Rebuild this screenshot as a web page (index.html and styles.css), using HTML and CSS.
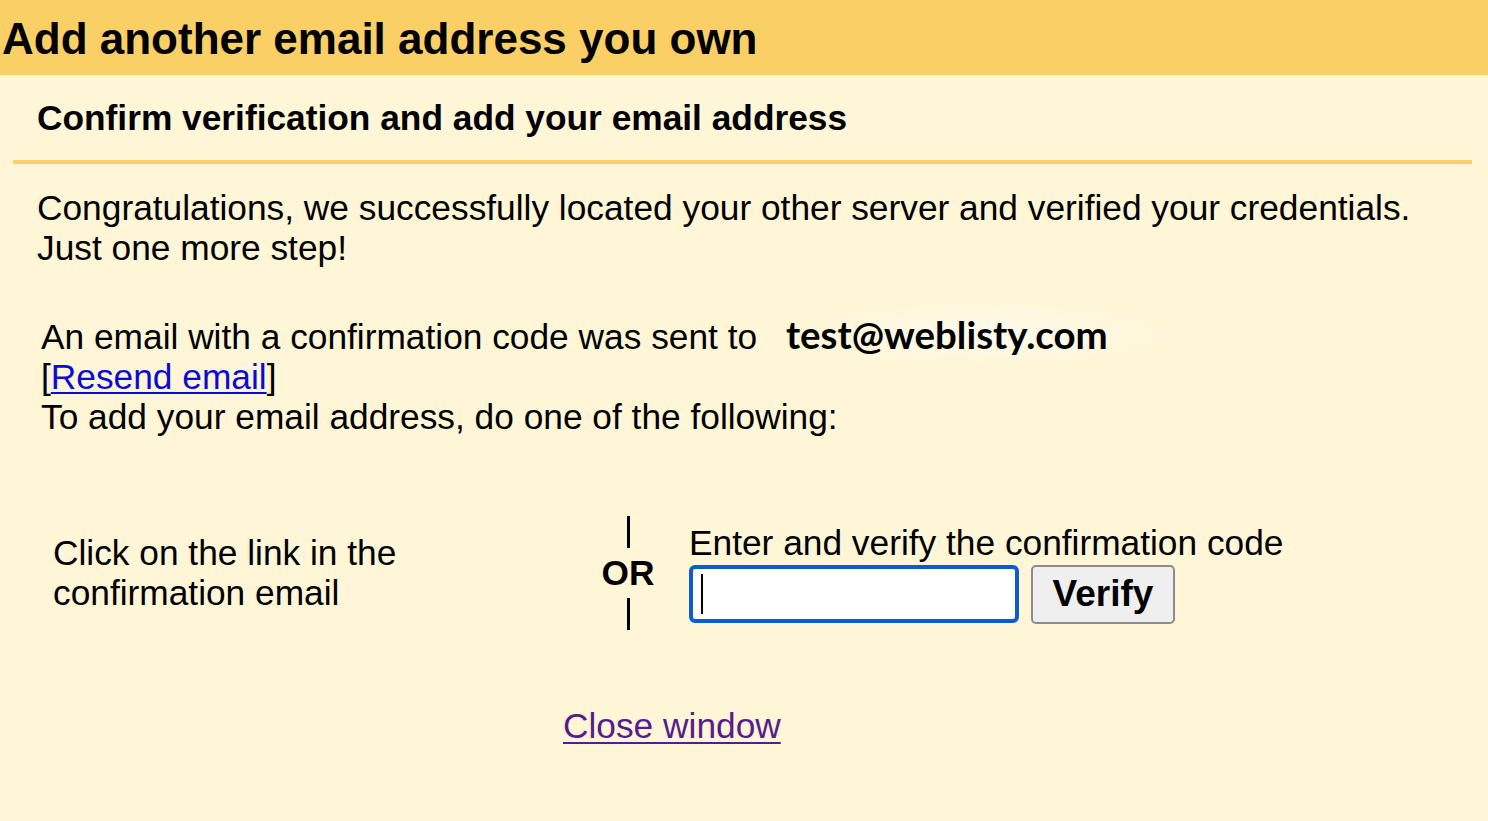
FILE: index.html
```html
<!DOCTYPE html>
<html lang="en">
<head>
<meta charset="utf-8">
<title>Add another email address you own</title>
<link rel="stylesheet" href="styles.css">
</head>
<body>
<div class="header">Add another email address you own</div>
<div class="content">
  <div class="subtitle">Confirm verification and add your email address</div>
  <div class="rule"></div>
  <p class="congrats">Congratulations, we successfully located your other server and verified your credentials.<br>Just one more step!</p>
  <div class="sent">
    <div>An email with a confirmation code was sent to <span class="email">test@weblisty.com</span></div>
    <div>[<a class="resend" href="#">Resend email</a>]</div>
    <div>To add your email address, do one of the following:</div>
  </div>
  <div class="options">
    <div class="opt-left">Click on the link in the<br>confirmation email</div>
    <div class="opt-or">
      <span class="bar"></span>
      <span class="or">OR</span>
      <span class="bar"></span>
    </div>
    <div class="opt-right">
      <div class="label">Enter and verify the confirmation code</div>
      <div class="verify-row">
        <div class="code-input"><span class="caret"></span></div>
        <button class="verify-btn" type="button">Verify</button>
      </div>
    </div>
  </div>
  <div class="close-row"><a class="close" href="#">Close window</a></div>
</div>
</body>
</html>
```
FILE: styles.css
```css
html, body {
  margin: 0;
  padding: 0;
}
body {
  width: 1488px;
  height: 821px;
  overflow: hidden;
  background: #fef6d7;
  font-family: "Liberation Sans", Arial, sans-serif;
  color: #000;
}
.header {
  background: #f9cf66;
  height: 75px;
  line-height: 77px;
  padding-left: 2px;
  font-size: 44px;
  font-weight: bold;
  white-space: nowrap;
}
.content {
  background: #fef6d7;
}
.subtitle {
  padding: 20px 0 20px 37px;
  line-height: 45px;
  font-size: 35.3px;
  font-weight: bold;
  white-space: nowrap;
}
.rule {
  height: 4px;
  margin: 0 16px 0 13px;
  background: #f9cf66;
}
.congrats {
  margin: 24px 0 0 37px;
  font-size: 35.3px;
  line-height: 40px;
  white-space: nowrap;
}
.sent {
  margin: 49px 0 0 41px;
  font-size: 35.3px;
  line-height: 40px;
  white-space: nowrap;
}
.email {
  font-family: Lato, "Open Sans", sans-serif;
  font-weight: bold;
  font-size: 38.4px;
  line-height: 30px;
  margin-left: 19px;
  background: radial-gradient(ellipse at center, rgba(255,255,255,0.55) 0%, rgba(255,255,255,0) 70%);
  padding: 10px 70px 10px 0;
}
.resend {
  color: #0b0bd9;
  text-decoration: underline;
  text-decoration-thickness: 2px;
  text-underline-offset: 3px;
}
.options {
  display: flex;
  align-items: center;
  margin: 79px 0 0 53px;
}
.opt-left {
  width: 547px;
  font-size: 35.3px;
  line-height: 40px;
}
.opt-or {
  width: 56px;
  display: flex;
  flex-direction: column;
  align-items: center;
}
.bar {
  width: 3px;
  height: 32px;
  background: #000;
}
.or {
  font-size: 35.3px;
  font-weight: bold;
  line-height: 50px;
}
.opt-right {
  margin-left: 33px;
}
.label {
  font-size: 35.3px;
  line-height: 40px;
  white-space: nowrap;
}
.verify-row {
  display: flex;
  align-items: center;
  gap: 12px;
  margin-top: 2px;
}
.code-input {
  box-sizing: border-box;
  width: 330px;
  height: 58px;
  border: 4px solid #0b5ccc;
  border-radius: 6px;
  background: #fff;
  display: flex;
  align-items: center;
  padding-left: 8px;
}
.caret {
  width: 2px;
  height: 40px;
  background: #000;
}
.verify-btn {
  box-sizing: border-box;
  width: 144px;
  height: 59px;
  background: #efefef;
  border: 2px solid #8c8c8c;
  border-radius: 5px;
  font-family: "Liberation Sans", Arial, sans-serif;
  font-size: 37px;
  font-weight: bold;
  color: #000;
  padding: 0;
}
.close-row {
  margin: 76px 0 0 563px;
  font-size: 35.3px;
  line-height: 40px;
}
.close {
  color: #561d8e;
  text-decoration: underline;
  text-decoration-thickness: 2px;
  text-underline-offset: 4px;
}
```
